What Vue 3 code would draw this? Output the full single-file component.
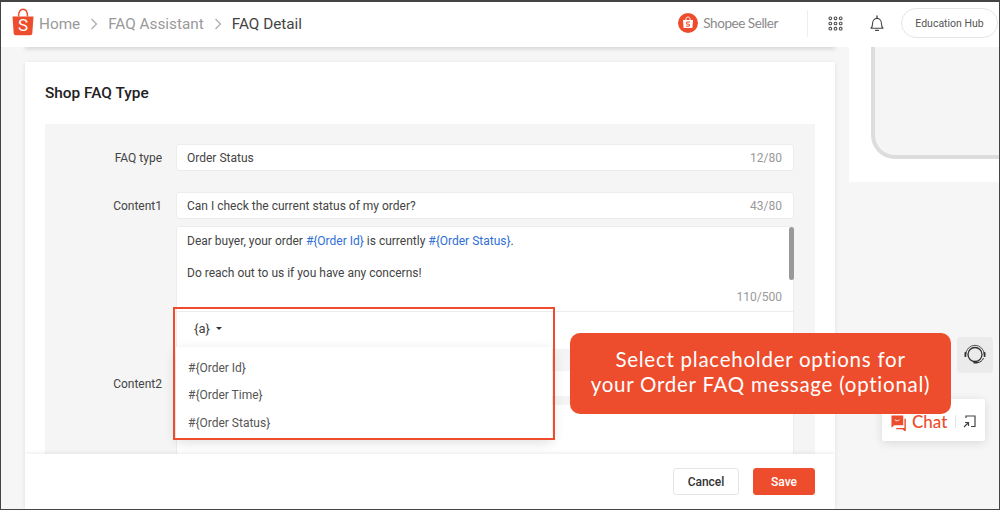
<script setup>
const options = ['#{Order Id}', '#{Order Time}', '#{Order Status}']
</script>

<template>
  <div class="page">
    <header class="topbar">
      <svg class="bag" width="24" height="28" viewBox="0 0 24 28">
        <path d="M1.500 8.500h21l-1.200 17a2 2 0 0 1-2 1.800H4.700a2 2 0 0 1-2-1.800z" fill="#ee4d2d" />
        <path d="M7.500 8.500C7.500 4 9.300 1.300 12 1.300s4.500 2.700 4.500 7.200" fill="none" stroke="#ee4d2d" stroke-width="1.500" />
        <text x="12" y="23" text-anchor="middle" class="bag-s">S</text>
      </svg>
      <nav class="crumbs">
        <span class="crumb">Home</span>
        <svg class="chev" width="8" height="12" viewBox="0 0 8 12"><path d="M1.500 1l5 5-5 5" /></svg>
        <span class="crumb">FAQ Assistant</span>
        <svg class="chev" width="8" height="12" viewBox="0 0 8 12"><path d="M1.500 1l5 5-5 5" /></svg>
        <span class="crumb current">FAQ Detail</span>
      </nav>
      <div class="seller">
        <svg width="20" height="20" viewBox="0 0 20 20">
          <circle cx="10" cy="10" r="10" fill="#ee4d2d" />
          <path d="M5 7h10l-.6 8H5.600z" fill="#fff" />
          <path d="M7.800 7c0-2 1-3 2.200-3s2.200 1 2.200 3" fill="none" stroke="#fff" stroke-width="1" />
          <path d="M12 9H8.700v2.200h2.600v2H8" fill="none" stroke="#ee4d2d" stroke-width="1" />
        </svg>
        <span>Shopee Seller</span>
      </div>
      <span class="vline"></span>
      <svg class="grid-icon" width="15" height="15" viewBox="0 0 15 15">
        <g fill="none" stroke="#555" stroke-width="1.100">
          <rect x="1" y="1" width="2.600" height="2.600" rx="1" /><rect x="6.200" y="1" width="2.600" height="2.600" rx="1" /><rect x="11.400" y="1" width="2.600" height="2.600" rx="1" />
          <rect x="1" y="6.200" width="2.600" height="2.600" rx="1" /><rect x="6.200" y="6.200" width="2.600" height="2.600" rx="1" /><rect x="11.400" y="6.200" width="2.600" height="2.600" rx="1" />
          <rect x="1" y="11.400" width="2.600" height="2.600" rx="1" /><rect x="6.200" y="11.400" width="2.600" height="2.600" rx="1" /><rect x="11.400" y="11.400" width="2.600" height="2.600" rx="1" />
        </g>
      </svg>
      <svg class="bell" width="14" height="17" viewBox="0 0 14 17">
        <path d="M1 13.300c1.300-1 1.500-2 1.500-4.300 0-3 1.700-5.600 4.500-5.600s4.500 2.600 4.500 5.600c0 2.300.2 3.300 1.500 4.300z" fill="none" stroke="#444" stroke-width="1.100" stroke-linejoin="round" />
        <path d="M7 1v2.200M5.500 15.300h3" fill="none" stroke="#444" stroke-width="1.300" stroke-linecap="round" />
      </svg>
      <button class="hub">Education Hub</button>
    </header>

    <main class="main">
      <section class="card">
        <h2 class="title">Shop FAQ Type</h2>
        <div class="form">
          <div class="row">
            <label class="label">FAQ type</label>
            <div class="input"><span>Order Status</span><span class="count">12/80</span></div>
          </div>
          <div class="row row-q">
            <label class="label">Content1</label>
            <div class="input"><span>Can I check the current status of my order?</span><span class="count">43/80</span></div>
          </div>
          <div class="row row-a">
            <label class="label">Content2</label>
            <div class="editor">
              <span class="scrollbar"></span>
              <div class="message">
                <p>Dear buyer, your order <span class="tag">#{Order Id}</span> is currently <span class="tag">#{Order Status}</span>.</p>
                <p>&nbsp;</p>
                <p>Do reach out to us if you have any concerns!</p>
              </div>
              <div class="count editor-count">110/500</div>
              <div class="toolbar">
                <span class="placeholder">{a}</span>
                <span class="caret"></span>
              </div>
              <div class="stripe stripe-a"></div>
              <div class="stripe stripe-b"></div>
            </div>
          </div>
        </div>
        <footer class="actions">
          <button class="btn">Cancel</button>
          <button class="btn primary">Save</button>
        </footer>
      </section>

      <aside class="side">
        <div class="preview"><div class="phone"></div></div>
      </aside>
    </main>

    <ul class="menu">
      <li v-for="o in options" :key="o">{{ o }}</li>
    </ul>
    <div class="frame"></div>

    <button class="support" aria-label="Support">
      <svg width="24" height="24" viewBox="0 0 24 24" fill="none" stroke="#333">
        <circle cx="12" cy="11.500" r="7" stroke-width="1.300" />
        <path d="M2.800 11.500a9.200 9.200 0 0 1 18.400 0" stroke-width="0.800" />
        <path d="M2.400 9.800v3.400M21.600 9.800v3.400" stroke-width="1.800" stroke-linecap="round" />
        <path d="M20.500 15c-1 3-3.500 4.500-6.500 4.700" stroke-width="1" />
        <path d="M11 19.800h3" stroke-width="1.600" stroke-linecap="round" />
      </svg>
    </button>

    <div class="chat">
      <svg class="chat-icon" width="16" height="16" viewBox="0 0 17 17">
        <path d="M0.500 0.500h12.500v10.500H3.500l-3 2.500z" fill="#ee4d2d" />
        <path d="M4 5c1.500 1.500 3.500 1.500 5 0" fill="none" stroke="#fff" stroke-width="1" />
        <path d="M15 4v10.500H5.500M15 14.500v2l-2.500-2" fill="none" stroke="#ee4d2d" stroke-width="1.500" />
      </svg>
      <span class="chat-word">Chat</span>
      <span class="chat-line"></span>
      <svg width="13" height="13" viewBox="0 0 13 13" fill="none" stroke="#444" stroke-width="1.200">
        <path d="M3 3V1h9v10.500H8" />
        <path d="M1 12l4-4M2 7.500h3.500V11" />
      </svg>
    </div>

    <div class="note">
      <span>Select placeholder options for</span>
      <span>your Order FAQ message (optional)</span>
    </div>
  </div>
</template>

<style>
html, body { margin: 0; }
</style>

<style scoped>
.page {
  position: relative;
  width: 1000px;
  height: 510px;
  box-sizing: border-box;
  border: 1px solid #444;
  border-top-width: 2px;
  background: #f6f6f6;
  overflow: hidden;
  display: flex;
  flex-direction: column;
  font-family: Roboto, "Liberation Sans", sans-serif;
  font-size: 12px;
  color: #444;
}
.topbar {
  position: relative;
  z-index: 2;
  flex: none;
  height: 45px;
  background: #fff;
  display: flex;
  align-items: center;
  padding-left: 10px;
}
.bag { flex: none; margin-top: -5px; }
.bag-s { font: 400 17px Roboto, sans-serif; fill: #fff; }
.crumbs { display: flex; align-items: center; margin: -2px 0 0 4px; font-size: 15.300px; }
.crumb { color: #999; }
.crumb.current { color: #444; }
.chev { margin: 0 10px; fill: none; stroke: #aaa; stroke-width: 1.200; }
.seller {
  display: flex;
  align-items: center;
  gap: 5px;
  margin-left: auto;
  margin-top: -4px;
  font-size: 13.500px;
  letter-spacing: -0.450px;
  color: #8a8a8a;
  font-family: Lato, sans-serif;
}
.vline { width: 1px; height: 27px; background: #eee; margin-left: 29px; margin-top: -3px; }
.grid-icon { margin-left: 20px; margin-top: -2px; }
.bell { margin-left: 27px; margin-top: -2px; }
.hub {
  margin: -3px 1px 0 17px;
  width: 97px;
  height: 30px;
  box-sizing: border-box;
  border: 1px solid #e5e5e5;
  border-radius: 15px;
  background: #fff;
  font: 400 10.500px Roboto, sans-serif;
  color: #555;
  padding: 0;
}
.main {
  flex: 1;
  min-height: 0;
  display: flex;
  align-items: stretch;
  padding-left: 24px;
  gap: 14px;
}
.main::before {
  content: "";
  position: absolute;
  left: 24px;
  top: 40px;
  width: 810px;
  height: 5px;
  box-shadow: 0 2px 4px rgba(0, 0, 0, 0.14);
}
.card {
  position: relative;
  margin-top: 15px;
  width: 810px;
  flex: none;
  background: #fff;
  box-shadow: 0 1px 4px rgba(0, 0, 0, 0.1);
  display: flex;
  flex-direction: column;
  overflow: hidden;
  min-height: 0;
}
.title {
  margin: 21px 20px 21px;
  font-size: 15.400px;
  line-height: 20px;
  font-weight: 500;
  color: #222;
}
.form {
  flex: 1;
  min-height: 0;
  margin: 0 20px;
  padding: 20px 21px 0 0;
  background: #f5f5f5;
  overflow: hidden;
}
.row { display: flex; align-items: center; }
.row-q { margin-top: 21px; }
.row-a { margin-top: 7px; }
.label {
  flex: none;
  width: 117px;
  padding-right: 14px;
  text-align: right;
  line-height: 16px;
  color: #444;
}
.input {
  flex: 1;
  height: 27px;
  box-sizing: border-box;
  padding: 1px 11px 0 10px;
  display: flex;
  align-items: center;
  justify-content: space-between;
  background: #fff;
  border: 1px solid #ececec;
  border-radius: 3px;
}
.count { color: #999; }
.editor {
  position: relative;
  flex: 1;
  height: 316px;
  box-sizing: border-box;
  background: #fff;
  border: 1px solid #ececec;
  border-radius: 3px;
  padding-top: 6px;
}
.scrollbar {
  position: absolute;
  right: -1px;
  top: 0;
  width: 5px;
  height: 53px;
  border-radius: 3px;
  background: #999;
}
.message { padding: 0 10px; line-height: 16px; }
.message p { margin: 0; }
.tag { color: #2f6fd6; }
.editor-count {
  margin-top: 8px;
  padding-right: 11px;
  text-align: right;
  line-height: 16px;
}
.toolbar {
  margin-top: 6px;
  height: 35px;
  border-top: 1px solid #ececec;
  box-sizing: border-box;
  display: flex;
  align-items: center;
  padding: 0 0 2px 17px;
  gap: 6px;
  font-size: 13px;
}
.caret {
  width: 0;
  height: 0;
  border: 3px solid transparent;
  border-top: 3.500px solid #333;
  border-bottom: 0;
}
.stripe { background: #f4f4f4; height: 22px; margin: 3px 0 0; }
.stripe-b { height: 9px; margin-top: 25px; }
.actions {
  position: relative;
  flex: none;
  height: 55px;
  box-sizing: border-box;
  background: #fff;
  box-shadow: 0 -1px 4px rgba(0, 0, 0, 0.08);
  padding: 14px 20px 0 0;
  display: flex;
  justify-content: flex-end;
  align-items: flex-start;
  gap: 14px;
}
.btn {
  height: 27px;
  width: 66px;
  box-sizing: border-box;
  background: #fff;
  border: 1px solid #e5e5e5;
  border-radius: 3px;
  font: 500 12px Roboto, sans-serif;
  color: #333;
  padding: 0;
}
.btn.primary {
  width: 62px;
  background: #ee4d2d;
  border-color: #ee4d2d;
  color: #fff;
}
.side { flex: 1; min-width: 0; }
.preview {
  height: 135px;
  background: #fff;
  padding-left: 22px;
  overflow: hidden;
}
.phone {
  margin-top: -40px;
  height: 152px;
  box-sizing: border-box;
  border: 4px solid #ddd;
  border-right: 0;
  border-radius: 0 0 0 24px;
  background: #f5f5f5;
}
.menu {
  position: absolute;
  z-index: 3;
  left: 175px;
  top: 345px;
  width: 376px;
  height: 91px;
  box-sizing: border-box;
  margin: 0;
  padding: 7.500px 0 0 12px;
  list-style: none;
  background: #fff;
  box-shadow: 0 4px 12px rgba(0, 0, 0, 0.14);
  line-height: 27.500px;
  color: #555;
}
.frame {
  position: absolute;
  z-index: 4;
  left: 172px;
  top: 305px;
  width: 382px;
  height: 133px;
  box-sizing: border-box;
  border: 2px solid #ee4d2d;
}
.support {
  position: absolute;
  left: 956px;
  top: 335px;
  width: 36px;
  height: 36px;
  border: 0;
  padding: 0;
  border-radius: 4px;
  background: #ebebeb;
  display: flex;
  align-items: center;
  justify-content: center;
}
.chat {
  position: absolute;
  left: 881px;
  top: 397px;
  width: 103px;
  height: 42px;
  box-sizing: border-box;
  padding: 2px 0 0 9px;
  border-radius: 2px;
  background: #fff;
  box-shadow: 0 2px 10px rgba(0, 0, 0, 0.12);
  display: flex;
  align-items: center;
}
.chat-icon { margin-top: 3px; }
.chat-word {
  margin-left: 5px;
  font: 500 17px Lato, sans-serif;
  color: #ee4d2d;
}
.chat-line { width: 1px; height: 13px; background: #e5e5e5; margin: 0 7px 0 8px; }
.note {
  position: absolute;
  z-index: 5;
  left: 569px;
  top: 331px;
  width: 381px;
  height: 81px;
  box-sizing: border-box;
  padding-bottom: 4px;
  border-radius: 10px;
  background: #ee4d2d;
  color: #fff;
  display: flex;
  flex-direction: column;
  align-items: center;
  justify-content: center;
  font: 400 20.500px/25px Lato, sans-serif;
  letter-spacing: 0.750px;
}
</style>
